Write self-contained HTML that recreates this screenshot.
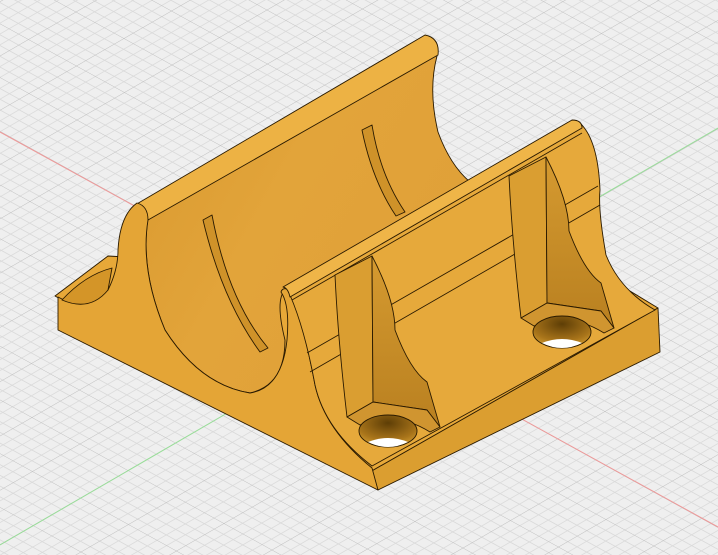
<!DOCTYPE html>
<html><head><style>html,body{margin:0;padding:0;background:#efefef;overflow:hidden}svg{display:block}</style></head>
<body>
<svg width="718" height="555" viewBox="0 0 718 555" xmlns="http://www.w3.org/2000/svg">
<defs>
<pattern id="g" width="50" height="50" patternUnits="userSpaceOnUse" patternTransform="matrix(0.96,0.53,0.95,-0.55,365,333)">
<rect width="50" height="50" fill="#efefef"/>
<path d="M10 0V50M20 0V50M30 0V50M40 0V50M0 10H50M0 20H50M0 30H50M0 40H50" stroke="#dadada" stroke-width="0.8" fill="none"/>
<path d="M0 0V50M0 0H50" stroke="#bdbdbd" stroke-width="1" fill="none"/>
</pattern>
<linearGradient id="ch" x1="0" y1="0" x2="1" y2="0.6"><stop offset="0" stop-color="#D8982E"/><stop offset="0.5" stop-color="#E2A43A"/><stop offset="1" stop-color="#E0A038"/></linearGradient>
<linearGradient id="wall" x1="0" y1="0" x2="0" y2="1"><stop offset="0" stop-color="#D59A30"/><stop offset="1" stop-color="#B98020"/></linearGradient>
<radialGradient id="hole" cx="0.5" cy="0.25" r="0.75"><stop offset="0" stop-color="#5e3e06"/><stop offset="0.7" stop-color="#a8741a"/><stop offset="1" stop-color="#d09a30"/></radialGradient>
</defs>
<rect width="718" height="555" fill="url(#g)"/>
<line x1="0" y1="132" x2="718" y2="527" stroke="#e99" stroke-width="1"/>
<line x1="0" y1="545" x2="718" y2="128" stroke="#9d9" stroke-width="1"/>
<g stroke="#2a1a00" stroke-width="0.9" stroke-linejoin="round">
<path d="M55 296 L108 256 L620 285 L658 308 L370 472 Z" fill="#E7A838"/>
<path d="M370 472 L658 308 L660 352 L378 490 Z" fill="#DB9E30"/>
<path d="M140 205 L428 36 Q440 45 437 56 Q428 90 438 132 Q450 165 470 182 L285 290 Q275 300 285 340 Q285 385 250 393 Q200 385 165 330 Q140 270 148 218 Z" fill="url(#ch)"/>
<path d="M135 205 L425 35 Q440 38 438 55 L148 220 Q145 208 135 205 Z" fill="#EDB244"/>
<path d="M58 297 Q80 310 108 290 Q118 270 118 250 Q120 215 137 203 Q148 206 148 220 Q140 270 165 330 Q200 385 250 393 Q282 388 287 340 Q290 305 281 292 Q283 286 290 291 Q305 330 315 385 Q325 430 372 468 L378 490 L58 330 Z" fill="#E4A536"/>
<path d="M62 300 Q90 312 108 290 L112 268 Q85 275 62 300 Z" fill="#D49528"/>
<path d="M203 220 L212 215 Q228 300 268 348 L260 352 Q222 300 203 220 Z" fill="#CF9229"/>
<path d="M362 130 L372 125 Q380 175 405 212 L396 216 Q372 180 362 130 Z" fill="#CF9229"/>
<path d="M290 295 Q305 330 315 385 Q325 430 372 466 L655 310 Q620 290 606 255 Q598 210 600 190 Q598 140 580 123 Z" fill="#E6A93B"/>
<path d="M283 287 L572 120 Q582 120 582 128 L290 297 Q288 288 283 287 Z" fill="#EFB548"/>
<path d="M292 300 L582 133" fill="none"/>
<path d="M307 353 L598 186 M310 372 L600 205" fill="none"/>
<path d="M335 275 L372 256 L373 402 L347 417 Q338 340 335 275 Z" fill="#DA9E31"/>
<path d="M372 256 Q395 300 395 330 Q410 370 427 382 L440 427 L427 410 L373 402 Z" fill="url(#wall)"/>
<path d="M347 417 L373 402 L427 410 L440 427 L430 432 Q395 410 360 425 Z" fill="#D09530"/>
<ellipse cx="388" cy="431" rx="29" ry="16" fill="url(#hole)"/>
<path d="M368 442 Q388 452 408 442 Q388 434 368 442 Z" fill="#fff" stroke="none"/>
<path d="M509 176 L546 157 L547 303 L521 318 Q512 240 509 176 Z" fill="#DA9E31"/>
<path d="M546 157 Q569 201 569 231 Q584 271 601 283 L614 328 L601 311 L547 303 Z" fill="url(#wall)"/>
<path d="M521 318 L547 303 L601 311 L614 328 L604 333 Q569 311 534 326 Z" fill="#D09530"/>
<ellipse cx="562" cy="332" rx="29" ry="16" fill="url(#hole)"/>
<path d="M542 343 Q562 353 582 343 Q562 335 542 343 Z" fill="#fff" stroke="none"/>
</g>
</svg>
</body></html>
